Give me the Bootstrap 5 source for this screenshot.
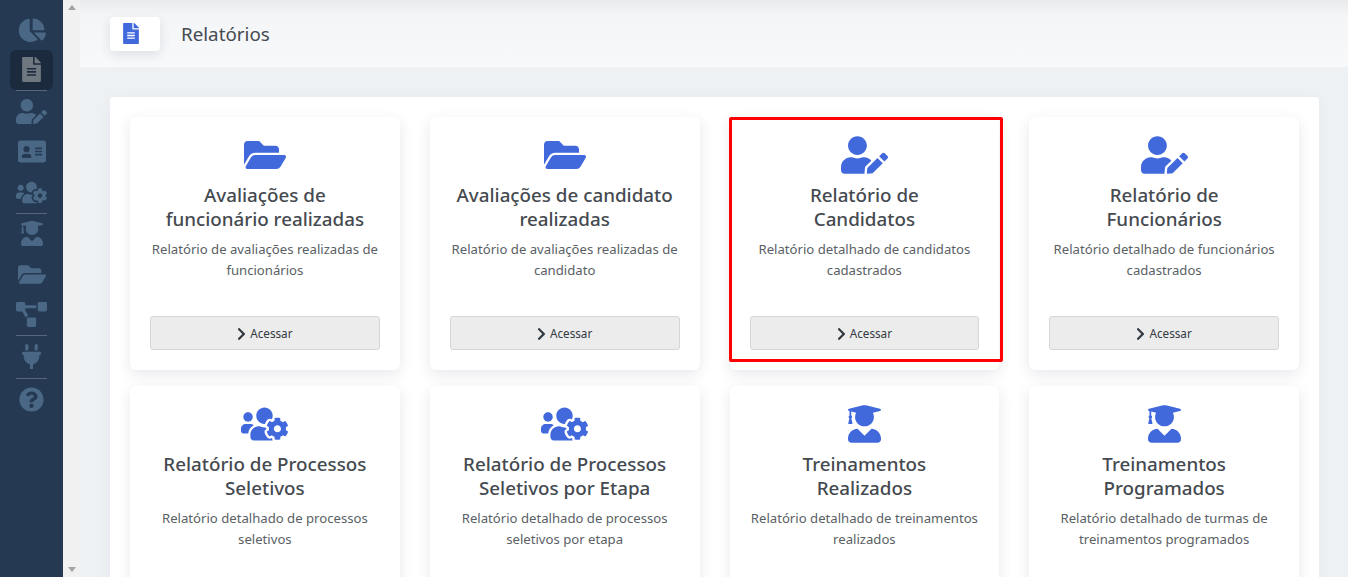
<!DOCTYPE html>
<html lang="pt-BR">
<head>
    <meta charset="UTF-8" />
    <meta name="viewport" content="width=device-width, initial-scale=1.0" />
    <title>Relatórios</title>

    <link href="https://cdn.jsdelivr.net/npm/bootstrap@5.3.2/dist/css/bootstrap.min.css" rel="stylesheet">
    <style>
        body { font-family: "Noto Sans", "Open Sans", sans-serif; background: #eef1f4; color: #454a50; }
        .menu-lateral { width: 63px; background: #253a52; padding-top: 9px; }
        .menu-item { height: 40.5px; width: 43px; border-radius: 6px; color: #4a6885; }
        .menu-item.ativo { background: #1b2a3d; color: #6f7781; }
        .menu-sep { width: 31px; height: 1px; background: #56677b; }
        .menu-sep.fim { margin-top: 1.5px; }
        .barra-rolagem { width: 17px; background: #f1f1f1; padding: 5px 0; }
        .seta-cima, .seta-baixo { width: 0; height: 0; border-left: 4px solid transparent; border-right: 4px solid transparent; }
        .seta-cima { border-bottom: 5px solid #a3a3a3; }
        .seta-baixo { border-top: 5px solid #a3a3a3; }
        .topo { height: 67px; padding-left: 30px; background: linear-gradient(#e9eaec, #f4f5f7 22%, #f8f9fb); }
        .topo-icone { width: 50px; height: 34px; padding-left: 13px; background: #fff; border-radius: 4px; box-shadow: 0 4px 12px rgba(40, 50, 70, .12); color: #4169dc; }
        .topo-titulo { margin: 0 0 0 21px; font-size: 18.8px; line-height: 24px; font-weight: 400; color: #454a50; }
        .painel { margin: 30px 29px 0 30px; padding: 20px; background: #fff; border-radius: 4px 4px 0 0; box-shadow: 0 2px 14px rgba(40, 50, 70, .04); }
        .grade-relatorios { display: grid; grid-template-columns: repeat(4, 1fr); column-gap: 30px; row-gap: 16px; }
        .relatorio { height: 253px; padding: 19px 20px 20px; border: 0; border-radius: 6px; box-shadow: 0 4px 14px rgba(40, 50, 70, .11); text-align: center; }
        .relatorio-icone { height: 38px; color: #4169dc; }
        .relatorio-titulo { margin: 9px 0 8px; font-size: 18.8px; line-height: 24px; font-weight: 500; color: #454a50; }
        .relatorio-desc { margin: 0; font-size: 13.15px; line-height: 21px; color: #5a5f65; }
        .btn-acessar { height: 34px; padding: 1px 0 0; font-size: 11.7px; background: #ececec; border: 1px solid #d6d6d6; border-radius: 3px; color: #333a42; }
        .destaque { position: absolute; left: -1px; top: 0; right: -4px; bottom: 8px; border: 3px solid #f00; border-radius: 2px; pointer-events: none; }
    </style>
</head>
<body class="vh-100 overflow-hidden">

<svg class="d-none">
    <symbol id="i-pie" viewBox="0 0 576 512"><path d="M558.3 320H322.4l157.1 157.1c6 6 15.8 6.5 22 .7 38.5-36.3 65-85.2 72.8-140.2 1.3-9.4-6.3-17.6-15.9-17.6zM542.6 255.6C534.3 135.1 438.9 39.7 318.4 31.4 309.3 30.8 301.6 38.5 301.6 47.7V272h224.3c9.2 0 16.9-7.7 16.7-16.4zM240 288V50.7c0-9.6-8.2-17.2-17.6-15.9C103.1 51.6 11.9 155.8 16 280.9c4.2 128.5 114.9 233.9 243.5 232.3 50.5-.6 97.2-17.4 135.1-45.2 7.8-5.7 8.3-17.1 1.5-23.9L240 288z" fill="currentColor"/></symbol>
    <symbol id="i-doc" viewBox="0 0 384 512"><path d="M224 136V0H24C10.7 0 0 10.7 0 24v464c0 13.3 10.7 24 24 24h336c13.3 0 24-10.7 24-24V160H248c-13.2 0-24-10.8-24-24zm64 236c0 6.6-5.4 12-12 12H108c-6.6 0-12-5.4-12-12v-8c0-6.6 5.4-12 12-12h168c6.6 0 12 5.4 12 12v8zm0-64c0 6.6-5.4 12-12 12H108c-6.6 0-12-5.4-12-12v-8c0-6.6 5.4-12 12-12h168c6.6 0 12 5.4 12 12v8zm0-72v8c0 6.6-5.4 12-12 12H108c-6.6 0-12-5.4-12-12v-8c0-6.6 5.4-12 12-12h168c6.6 0 12 5.4 12 12zm96-114.1v6.1H256V0h6.1c6.4 0 12.5 2.5 17 7l97.9 98c4.5 4.5 7 10.6 7 16.9z" fill="currentColor"/></symbol>
    <symbol id="i-user-edit" viewBox="0 0 640 512"><path d="M224 256c70.7 0 128-57.3 128-128S294.7 0 224 0 96 57.3 96 128s57.3 128 128 128zm89.6 32h-16.7c-22.2 10.2-46.9 16-72.9 16s-50.6-5.8-72.9-16h-16.7C60.2 288 0 348.2 0 422.4V464c0 26.5 21.5 48 48 48h274.9c-2.4-6.8-3.4-14-2.6-21.3l6.8-60.9 1.2-11.1 7.9-7.9 77.3-77.3c-24.5-27.7-60-45.5-99.9-45.5zm45.3 145.3l-6.8 61c-1.1 10.2 7.5 18.8 17.6 17.6l60.9-6.8 137.9-137.9-71.7-71.7-137.9 137.8zM633 268.9L595.1 231c-9.3-9.3-24.5-9.3-33.8 0l-37.8 37.8-4.1 4.1 71.8 71.7 41.8-41.8c9.3-9.4 9.3-24.5 0-33.9z" fill="currentColor"/></symbol>
    <symbol id="i-id" viewBox="0 0 576 512"><path fill-rule="evenodd" d="M48 32h480c26.5 0 48 21.5 48 48v352c0 26.5-21.5 48-48 48H48c-26.500 0-48-21.500-48-48V80c0-26.500 21.500-48 48-48zM176 144a64 64 0 1 0 0 128 64 64 0 0 0 0-128zM80 376c0 10 8 16 16 16h160c8 0 16-6 16-16v-20c0-30-26-52-56-52h-8c-16 7-40 7-56 0h-8c-30 0-64 22-64 52zM352 176v32h144v-32zM352 240v32h144v-32zM352 304v32h144v-32z" fill="currentColor"/></symbol>
    <symbol id="i-users-cog" viewBox="0 0 640 512"><path d="M610.5 341.3c2.6-14.1 2.6-28.5 0-42.6l25.8-14.9c3-1.7 4.3-5.2 3.3-8.5-6.7-21.6-18.2-41.2-33.2-57.4-2.3-2.5-6-3.1-9-1.4l-25.8 14.9c-10.9-9.3-23.4-16.5-36.9-21.3v-29.8c0-3.4-2.4-6.4-5.7-7.1-22.3-5-45-4.8-66.2 0-3.3.7-5.7 3.7-5.7 7.1v29.8c-13.5 4.8-26 12-36.9 21.3l-25.8-14.9c-2.9-1.7-6.7-1.1-9 1.4-15 16.2-26.5 35.8-33.2 57.4-1 3.3.4 6.8 3.3 8.5l25.8 14.9c-2.6 14.1-2.6 28.5 0 42.6l-25.8 14.9c-3 1.7-4.3 5.2-3.3 8.5 6.7 21.6 18.2 41.1 33.2 57.4 2.3 2.5 6 3.1 9 1.4l25.8-14.9c10.9 9.3 23.4 16.5 36.9 21.3v29.8c0 3.4 2.4 6.4 5.7 7.1 22.3 5 45 4.8 66.2 0 3.3-.7 5.7-3.7 5.7-7.1v-29.8c13.5-4.8 26-12 36.9-21.3l25.8 14.9c2.9 1.7 6.7 1.1 9-1.4 15-16.2 26.5-35.8 33.2-57.4 1-3.3-.4-6.8-3.3-8.5l-25.8-14.9zM496 368.500c-26.800 0-48.500-21.800-48.500-48.500s21.800-48.500 48.500-48.500 48.500 21.800 48.500 48.500-21.700 48.500-48.500 48.500zM96 224c35.300 0 64-28.700 64-64s-28.700-64-64-64-64 28.700-64 64 28.700 64 64 64zm224 32c1.900 0 3.700-.500 5.600-.600 8.300-21.700 20.500-42.100 36.300-59.200 7.400-8 17.900-12.600 28.900-12.600 6.900 0 13.700 1.800 19.600 5.300l7.900 4.600c.800-.500 1.600-.900 2.400-1.400 7-14.600 11.200-30.800 11.200-48 0-61.900-50.100-112-112-112S208 82.100 208 144c0 61.900 50.100 112 112 112zm105.200 194.500c-2.300-1.200-4.600-2.600-6.800-3.900-8.200 4.800-15.300 9.800-27.500 9.800-10.900 0-21.400-4.600-28.900-12.600-18.300-19.800-32.300-43.900-40.200-69.600-10.700-34.500 24.900-49.700 25.800-50.300-.100-2.600-.100-5.200 0-7.800l-7.900-4.600c-3.800-2.200-7-5-9.800-8.100-3.300.200-6.500.600-9.800.600-24.600 0-47.600-6-68.500-16h-8.300C179.600 288 128 339.600 128 403.200V432c0 26.500 21.500 48 48 48h255.400c-3.700-6-6.200-12.800-6.200-20.300v-9.200zM173.100 274.600C161.500 263.100 145.600 256 128 256H64c-35.300 0-64 28.700-64 64v32c0 17.700 14.300 32 32 32h65.900c6.300-47.400 34.900-87.300 75.200-109.400z" fill="currentColor"/></symbol>
    <symbol id="i-grad" viewBox="0 0 448 512"><path d="M319.400 320.600L224 416l-95.400-95.400C57.100 323.700 0 382.200 0 454.400v9.600c0 26.500 21.500 48 48 48h352c26.500 0 48-21.500 48-48v-9.600c0-72.200-57.100-130.700-128.600-133.800zM13.600 79.800l6.400 1.500v58.400c-7 4.200-12 11.500-12 20.300 0 8.400 4.600 15.400 11.100 19.700L3.500 242c-1.700 6.900 2.100 14 7.600 14h41.800c5.500 0 9.300-7.100 7.600-14l-15.600-62.300C51.400 175.400 56 168.400 56 160c0-8.800-5-16.100-12-20.300V87.100l66 15.900c-8.600 17.200-14 36.400-14 57 0 70.700 57.300 128 128 128s128-57.300 128-128c0-20.600-5.300-39.800-14-57l96.300-23.200c18.200-4.400 18.200-27.100 0-31.500l-190.400-46c-13-3.100-26.700-3.100-39.700 0L13.600 48.200c-18.100 4.400-18.100 27.200 0 31.600z" fill="currentColor"/></symbol>
    <symbol id="i-folder" viewBox="0 0 576 512"><path d="M572.694 292.093L500.27 416.248A63.997 63.997 0 0 1 444.989 448H45.025c-18.523 0-30.064-20.093-20.731-36.093l72.424-124.155A64 64 0 0 1 152 256h399.964c18.523 0 30.064 20.093 20.73 36.093zM152 224h328v-48c0-26.51-21.49-48-48-48H272l-64-64H48C21.49 64 0 85.49 0 112v278.046l69.077-118.418C86.214 242.25 117.989 224 152 224z" fill="currentColor"/></symbol>
    <symbol id="i-diagram" viewBox="0 0 640 512"><path d="M384 320H256c-17.67 0-32 14.33-32 32v128c0 17.67 14.33 32 32 32h128c17.67 0 32-14.33 32-32V352c0-17.67-14.33-32-32-32zM192 32c0-17.67-14.33-32-32-32H32C14.33 0 0 14.33 0 32v128c0 17.67 14.33 32 32 32h95.72l73.16 128.04C211.98 300.98 232.4 288 256 288h.28L192 175.51V128h224V64H192V32zM608 0H480c-17.67 0-32 14.33-32 32v128c0 17.67 14.33 32 32 32h128c17.67 0 32-14.33 32-32V32c0-17.67-14.33-32-32-32z" fill="currentColor"/></symbol>
    <symbol id="i-plug" viewBox="0 0 384 512"><path d="M320,32a32,32,0,0,0-64,0v96h64Zm48,128H16A16,16,0,0,0,0,176v32a16,16,0,0,0,16,16H32v32A160.07,160.07,0,0,0,160,412.8V512h64V412.8A160.07,160.07,0,0,0,352,256V224h16a16,16,0,0,0,16-16V176A16,16,0,0,0,368,160ZM128,32a32,32,0,0,0-64,0v96h64Z" fill="currentColor"/></symbol>
    <symbol id="i-help" viewBox="0 0 512 512"><path d="M504 256c0 136.997-111.043 248-248 248S8 392.997 8 256C8 119.083 119.043 8 256 8s248 111.083 248 248zM262.655 90c-54.497 0-89.255 22.957-116.549 63.758-3.536 5.286-2.353 12.415 2.715 16.258l34.699 26.31c5.205 3.947 12.621 3.008 16.665-2.122 17.864-22.658 30.113-35.797 57.303-35.797 20.429 0 45.698 13.148 45.698 32.958 0 14.976-12.363 22.667-32.534 33.976C247.128 238.528 216 254.941 216 296v4c0 6.627 5.373 12 12 12h56c6.627 0 12-5.373 12-12v-1.333c0-28.462 83.186-29.647 83.186-106.667 0-58.002-60.165-102-116.531-102zM256 338c-25.365 0-46 20.635-46 46 0 25.364 20.635 46 46 46s46-20.636 46-46c0-25.365-20.635-46-46-46z" fill="currentColor"/></symbol>
    <symbol id="i-chevron" viewBox="0 0 320 512"><path d="M285.476 272.971L91.132 467.314c-9.373 9.373-24.569 9.373-33.941 0l-22.667-22.667c-9.357-9.357-9.375-24.522-.04-33.901L188.505 256 34.484 101.255c-9.335-9.379-9.317-24.544.04-33.901l22.667-22.667c9.373-9.373 24.569-9.373 33.941 0L285.475 239.03c9.373 9.372 9.373 24.568.001 33.941z" fill="currentColor"/></symbol>
</svg>

<div class="d-flex h-100">
    <!-- Menu lateral -->
    <nav class="menu-lateral d-flex flex-column align-items-center flex-shrink-0">
        <a class="menu-item d-flex align-items-center justify-content-center"><svg width="28" height="25"><use href="#i-pie"/></svg></a>
        <a class="menu-item ativo d-flex align-items-center justify-content-center"><svg width="19" height="25"><use href="#i-doc"/></svg></a>
        <div class="menu-sep"></div>
        <a class="menu-item d-flex align-items-center justify-content-center"><svg width="31" height="25"><use href="#i-user-edit"/></svg></a>
        <a class="menu-item d-flex align-items-center justify-content-center"><svg width="28" height="25"><use href="#i-id"/></svg></a>
        <a class="menu-item d-flex align-items-center justify-content-center"><svg width="31" height="25"><use href="#i-users-cog"/></svg></a>
        <div class="menu-sep"></div>
        <a class="menu-item d-flex align-items-center justify-content-center"><svg width="22" height="25"><use href="#i-grad"/></svg></a>
        <a class="menu-item d-flex align-items-center justify-content-center"><svg width="28" height="25"><use href="#i-folder"/></svg></a>
        <a class="menu-item d-flex align-items-center justify-content-center"><svg width="31" height="25"><use href="#i-diagram"/></svg></a>
        <div class="menu-sep"></div>
        <a class="menu-item d-flex align-items-center justify-content-center"><svg width="19" height="25"><use href="#i-plug"/></svg></a>
        <div class="menu-sep fim"></div>
        <a class="menu-item d-flex align-items-center justify-content-center"><svg width="25" height="25"><use href="#i-help"/></svg></a>
    </nav>

    <!-- Barra de rolagem -->
    <div class="barra-rolagem d-flex flex-column align-items-center justify-content-between flex-shrink-0">
        <div class="seta-cima"></div>
        <div class="seta-baixo"></div>
    </div>

    <!-- Conteudo -->
    <main class="flex-grow-1 overflow-hidden">
        <div class="topo d-flex align-items-center">
            <div class="topo-icone d-flex align-items-center"><svg width="16" height="21"><use href="#i-doc"/></svg></div>
            <h1 class="topo-titulo">Relatórios</h1>
        </div>

        <div class="painel">
            <div class="grade-relatorios" id="grade"></div>
        </div>
    </main>
</div>

<script src="https://cdn.jsdelivr.net/npm/bootstrap@5.3.2/dist/js/bootstrap.bundle.min.js"></script>
<script>
    const relatorios = [
        ['i-folder', 42, 'Avaliações de<br>funcionário realizadas', 'Relatório de avaliações realizadas de funcionários'],
        ['i-folder', 42, 'Avaliações de candidato<br>realizadas', 'Relatório de avaliações realizadas de candidato'],
        ['i-user-edit', 47, 'Relatório de<br>Candidatos', 'Relatório detalhado de candidatos cadastrados', true],
        ['i-user-edit', 47, 'Relatório de<br>Funcionários', 'Relatório detalhado de funcionários cadastrados'],
        ['i-users-cog', 47, 'Relatório de Processos<br>Seletivos', 'Relatório detalhado de processos seletivos'],
        ['i-users-cog', 47, 'Relatório de Processos<br>Seletivos por Etapa', 'Relatório detalhado de processos seletivos por etapa'],
        ['i-grad', 33, 'Treinamentos<br>Realizados', 'Relatório detalhado de treinamentos realizados'],
        ['i-grad', 33, 'Treinamentos<br>Programados', 'Relatório detalhado de turmas de treinamentos programados']
    ];

    document.getElementById('grade').innerHTML = relatorios.map(([icone, largura, titulo, desc, marcado], i) => `
        <div class="position-relative">
            <div class="card relatorio d-flex flex-column">
                <div class="relatorio-icone"><svg width="${largura}" height="38"><use href="#${icone}"/></svg></div>
                <h5 class="relatorio-titulo">${titulo}</h5>
                <p class="relatorio-desc">${desc}</p>
                ${i < 4 ? '<button type="button" class="btn btn-acessar w-100 mt-auto d-flex align-items-center justify-content-center"><svg width="9" height="14" class="me-1"><use href="#i-chevron"/></svg>Acessar</button>' : ''}
            </div>
            ${marcado ? '<div class="destaque"></div>' : ''}
        </div>
    `).join('');
</script>

</body>
</html>
